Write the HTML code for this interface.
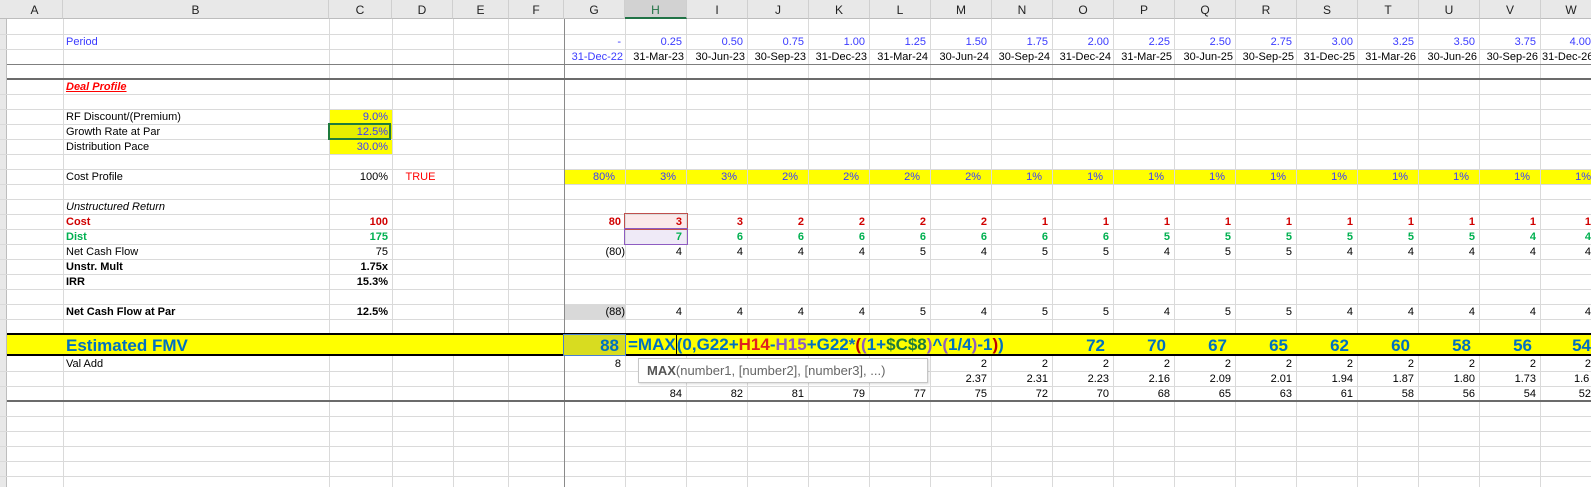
<!DOCTYPE html>
<html><head><meta charset="utf-8"><style>
*{margin:0;padding:0;box-sizing:border-box}
body{width:1591px;height:487px;overflow:hidden;background:#fff;font-family:"Liberation Sans",Arial,sans-serif;font-size:11px;color:#000;position:relative}
div{position:absolute}
.hl{left:0;width:1591px;height:1px;background:#dadada}
.vl{top:19px;width:1px;height:468px;background:#dadada}
.t{height:15px;line-height:17px;white-space:nowrap;text-align:right;padding-right:4px;width:61px}
.l{text-align:left;padding-left:3px;width:300px}
.b{font-weight:bold}
.blu{color:#3b3bff}
.red{color:#d00000;font-weight:bold}
.grn{color:#00b050;font-weight:bold}
.yel{background:#ffff00}
.hd{top:0;height:19px;line-height:20px;text-align:center;font-size:12px;color:#222;background:#e8e8e8;border-right:1px solid #cfcfcf;border-bottom:1px solid #bdbdbd}
.fmv{color:#0070c0;font-weight:bold;font-size:17px;height:22px;line-height:23px;top:334px}
.dt{font-size:11px;padding-right:2px}
</style></head><body>
<div class="hd" style="left:0;width:8px"></div>
<div class="hd" style="left:7px;width:56px">A</div>
<div class="hd" style="left:63px;width:266px">B</div>
<div class="hd" style="left:329px;width:63px">C</div>
<div class="hd" style="left:392px;width:61px">D</div>
<div class="hd" style="left:453px;width:56px">E</div>
<div class="hd" style="left:509px;width:55px">F</div>
<div class="hd" style="left:564px;width:61px">G</div>
<div class="hd" style="left:625px;width:62px;background:#d2d2d2;border-bottom:2px solid #217346;color:#217346">H</div>
<div class="hd" style="left:687px;width:61px">I</div>
<div class="hd" style="left:748px;width:61px">J</div>
<div class="hd" style="left:809px;width:61px">K</div>
<div class="hd" style="left:870px;width:61px">L</div>
<div class="hd" style="left:931px;width:61px">M</div>
<div class="hd" style="left:992px;width:61px">N</div>
<div class="hd" style="left:1053px;width:61px">O</div>
<div class="hd" style="left:1114px;width:61px">P</div>
<div class="hd" style="left:1175px;width:61px">Q</div>
<div class="hd" style="left:1236px;width:61px">R</div>
<div class="hd" style="left:1297px;width:61px">S</div>
<div class="hd" style="left:1358px;width:61px">T</div>
<div class="hd" style="left:1419px;width:61px">U</div>
<div class="hd" style="left:1480px;width:61px">V</div>
<div class="hd" style="left:1541px;width:61px">W</div>
<div style="left:0;top:19px;width:7px;height:468px;background:#e8e8e8;border-right:1px solid #bdbdbd"></div>

<div class="yel" style="left:329px;top:109px;width:63px;height:45px"></div>
<div class="yel" style="left:564px;top:169px;width:1027px;height:15px"></div>
<div style="left:564px;top:304px;width:61px;height:15px;background:#d9d9d9"></div>
<div style="left:625px;top:214px;width:62px;height:15px;background:#fbe9ea"></div>
<div style="left:625px;top:229px;width:62px;height:15px;background:#efeaf7"></div>

<div class="hl" style="top:34px"></div><div class="hl" style="top:49px"></div>
<div class="hl" style="top:94px"></div><div class="hl" style="top:109px"></div><div class="hl" style="top:124px"></div><div class="hl" style="top:139px"></div><div class="hl" style="top:154px"></div><div class="hl" style="top:169px"></div><div class="hl" style="top:184px"></div><div class="hl" style="top:199px"></div><div class="hl" style="top:214px"></div><div class="hl" style="top:229px"></div><div class="hl" style="top:244px"></div><div class="hl" style="top:259px"></div><div class="hl" style="top:274px"></div><div class="hl" style="top:289px"></div><div class="hl" style="top:304px"></div><div class="hl" style="top:319px"></div>
<div class="hl" style="top:371px"></div><div class="hl" style="top:386px"></div><div class="hl" style="top:416px"></div><div class="hl" style="top:431px"></div><div class="hl" style="top:446px"></div><div class="hl" style="top:461px"></div><div class="hl" style="top:476px"></div>
<div class="vl" style="left:63px"></div><div class="vl" style="left:329px"></div><div class="vl" style="left:392px"></div><div class="vl" style="left:453px"></div><div class="vl" style="left:508px"></div>
<div class="vl" style="left:564px;background:#8a8a8a"></div>
<div class="vl" style="left:625px"></div><div class="vl" style="left:686px"></div><div class="vl" style="left:747px"></div><div class="vl" style="left:808px"></div><div class="vl" style="left:869px"></div><div class="vl" style="left:930px"></div><div class="vl" style="left:991px"></div><div class="vl" style="left:1052px"></div><div class="vl" style="left:1113px"></div><div class="vl" style="left:1174px"></div><div class="vl" style="left:1235px"></div><div class="vl" style="left:1296px"></div><div class="vl" style="left:1357px"></div><div class="vl" style="left:1418px"></div><div class="vl" style="left:1479px"></div><div class="vl" style="left:1540px"></div>
<div style="left:7px;top:64px;width:1584px;height:1px;background:#7f7f7f"></div>
<div style="left:7px;top:78px;width:1584px;height:2px;background:#6b6b6b"></div>
<div style="left:7px;top:400px;width:1584px;height:2px;background:#6b6b6b"></div>

<div class="yel" style="left:7px;top:333px;width:1584px;height:23px;border-top:2px solid #000;border-bottom:2px solid #000"></div>

<div class="t l blu" style="left:63px;top:34px">Period</div>
<div class="t l" style="left:63px;top:79px;color:#ff0000;font-weight:bold;font-style:italic;text-decoration:underline">Deal Profile</div>
<div class="t l" style="left:63px;top:109px">RF Discount/(Premium)</div>
<div class="t l" style="left:63px;top:124px">Growth Rate at Par</div>
<div class="t l" style="left:63px;top:139px">Distribution Pace</div>
<div class="t l" style="left:63px;top:169px">Cost Profile</div>
<div class="t l" style="left:63px;top:199px;font-style:italic">Unstructured Return</div>
<div class="t l red" style="left:63px;top:214px">Cost</div>
<div class="t l grn" style="left:63px;top:229px">Dist</div>
<div class="t l" style="left:63px;top:244px">Net Cash Flow</div>
<div class="t l b" style="left:63px;top:259px">Unstr. Mult</div>
<div class="t l b" style="left:63px;top:274px">IRR</div>
<div class="t l b" style="left:63px;top:304px">Net Cash Flow at Par</div>
<div class="t l fmv" style="left:63px">Estimated FMV</div>
<div class="t l" style="left:63px;top:356px">Val Add</div>

<div class="t blu" style="left:329px;top:109px;width:63px">9.0%</div>
<div class="t blu" style="left:329px;top:124px;width:63px;background:#e6ee00">12.5%</div>
<div style="left:328px;top:123px;width:63px;height:17px;border:2px solid #1e7b3c"></div>
<div class="t blu" style="left:329px;top:139px;width:63px">30.0%</div>
<div class="t" style="left:329px;top:169px;width:63px">100%</div>
<div class="t" style="left:392px;top:169px;width:61px;text-align:center;color:#ff0000">TRUE</div>
<div class="t red" style="left:329px;top:214px;width:63px">100</div>
<div class="t grn" style="left:329px;top:229px;width:63px">175</div>
<div class="t" style="left:329px;top:244px;width:63px">75</div>
<div class="t b" style="left:329px;top:259px;width:63px">1.75x</div>
<div class="t b" style="left:329px;top:274px;width:63px">15.3%</div>
<div class="t b" style="left:329px;top:304px;width:63px">12.5%</div>

<div class="t blu" style="left:564px;top:34px">-</div>
<div class="t blu" style="left:625px;top:34px">0.25</div><div class="t blu" style="left:686px;top:34px">0.50</div><div class="t blu" style="left:747px;top:34px">0.75</div><div class="t blu" style="left:808px;top:34px">1.00</div><div class="t blu" style="left:869px;top:34px">1.25</div><div class="t blu" style="left:930px;top:34px">1.50</div><div class="t blu" style="left:991px;top:34px">1.75</div><div class="t blu" style="left:1052px;top:34px">2.00</div><div class="t blu" style="left:1113px;top:34px">2.25</div><div class="t blu" style="left:1174px;top:34px">2.50</div><div class="t blu" style="left:1235px;top:34px">2.75</div><div class="t blu" style="left:1296px;top:34px">3.00</div><div class="t blu" style="left:1357px;top:34px">3.25</div><div class="t blu" style="left:1418px;top:34px">3.50</div><div class="t blu" style="left:1479px;top:34px">3.75</div><div class="t blu" style="left:1540px;top:34px;width:51px;padding-right:0;overflow:hidden;text-align:right">4.00</div>
<div class="t blu dt" style="left:564px;top:49px">31-Dec-22</div>
<div class="t dt" style="left:625px;top:49px">31-Mar-23</div><div class="t dt" style="left:686px;top:49px">30-Jun-23</div><div class="t dt" style="left:747px;top:49px">30-Sep-23</div><div class="t dt" style="left:808px;top:49px">31-Dec-23</div><div class="t dt" style="left:869px;top:49px">31-Mar-24</div><div class="t dt" style="left:930px;top:49px">30-Jun-24</div><div class="t dt" style="left:991px;top:49px">30-Sep-24</div><div class="t dt" style="left:1052px;top:49px">31-Dec-24</div><div class="t dt" style="left:1113px;top:49px">31-Mar-25</div><div class="t dt" style="left:1174px;top:49px">30-Jun-25</div><div class="t dt" style="left:1235px;top:49px">30-Sep-25</div><div class="t dt" style="left:1296px;top:49px">31-Dec-25</div><div class="t dt" style="left:1357px;top:49px">31-Mar-26</div><div class="t dt" style="left:1418px;top:49px">30-Jun-26</div><div class="t dt" style="left:1479px;top:49px">30-Sep-26</div><div class="t dt" style="left:1540px;top:49px;text-align:left;padding-left:2px">31-Dec-26</div>

<div class="t blu" style="left:564px;top:169px;padding-right:10px">80%</div>
<div class="t blu" style="left:625px;top:169px;padding-right:10px">3%</div><div class="t blu" style="left:686px;top:169px;padding-right:10px">3%</div><div class="t blu" style="left:747px;top:169px;padding-right:10px">2%</div><div class="t blu" style="left:808px;top:169px;padding-right:10px">2%</div><div class="t blu" style="left:869px;top:169px;padding-right:10px">2%</div><div class="t blu" style="left:930px;top:169px;padding-right:10px">2%</div><div class="t blu" style="left:991px;top:169px;padding-right:10px">1%</div><div class="t blu" style="left:1052px;top:169px;padding-right:10px">1%</div><div class="t blu" style="left:1113px;top:169px;padding-right:10px">1%</div><div class="t blu" style="left:1174px;top:169px;padding-right:10px">1%</div><div class="t blu" style="left:1235px;top:169px;padding-right:10px">1%</div><div class="t blu" style="left:1296px;top:169px;padding-right:10px">1%</div><div class="t blu" style="left:1357px;top:169px;padding-right:10px">1%</div><div class="t blu" style="left:1418px;top:169px;padding-right:10px">1%</div><div class="t blu" style="left:1479px;top:169px;padding-right:10px">1%</div><div class="t blu" style="left:1540px;top:169px;width:51px;padding-right:0">1%</div>

<div class="t red" style="left:564px;top:214px">80</div>
<div class="t red" style="left:625px;top:214px">3</div><div class="t red" style="left:686px;top:214px">3</div><div class="t red" style="left:747px;top:214px">2</div><div class="t red" style="left:808px;top:214px">2</div><div class="t red" style="left:869px;top:214px">2</div><div class="t red" style="left:930px;top:214px">2</div><div class="t red" style="left:991px;top:214px">1</div><div class="t red" style="left:1052px;top:214px">1</div><div class="t red" style="left:1113px;top:214px">1</div><div class="t red" style="left:1174px;top:214px">1</div><div class="t red" style="left:1235px;top:214px">1</div><div class="t red" style="left:1296px;top:214px">1</div><div class="t red" style="left:1357px;top:214px">1</div><div class="t red" style="left:1418px;top:214px">1</div><div class="t red" style="left:1479px;top:214px">1</div><div class="t red" style="left:1540px;top:214px;width:51px;padding-right:0">1</div>
<div class="t grn" style="left:625px;top:229px">7</div><div class="t grn" style="left:686px;top:229px">6</div><div class="t grn" style="left:747px;top:229px">6</div><div class="t grn" style="left:808px;top:229px">6</div><div class="t grn" style="left:869px;top:229px">6</div><div class="t grn" style="left:930px;top:229px">6</div><div class="t grn" style="left:991px;top:229px">6</div><div class="t grn" style="left:1052px;top:229px">6</div><div class="t grn" style="left:1113px;top:229px">5</div><div class="t grn" style="left:1174px;top:229px">5</div><div class="t grn" style="left:1235px;top:229px">5</div><div class="t grn" style="left:1296px;top:229px">5</div><div class="t grn" style="left:1357px;top:229px">5</div><div class="t grn" style="left:1418px;top:229px">5</div><div class="t grn" style="left:1479px;top:229px">4</div><div class="t grn" style="left:1540px;top:229px;width:51px;padding-right:0">4</div>
<div class="t" style="left:564px;top:244px;padding-right:0">(80)</div>
<div class="t" style="left:625px;top:244px">4</div><div class="t" style="left:686px;top:244px">4</div><div class="t" style="left:747px;top:244px">4</div><div class="t" style="left:808px;top:244px">4</div><div class="t" style="left:869px;top:244px">5</div><div class="t" style="left:930px;top:244px">4</div><div class="t" style="left:991px;top:244px">5</div><div class="t" style="left:1052px;top:244px">5</div><div class="t" style="left:1113px;top:244px">4</div><div class="t" style="left:1174px;top:244px">5</div><div class="t" style="left:1235px;top:244px">5</div><div class="t" style="left:1296px;top:244px">4</div><div class="t" style="left:1357px;top:244px">4</div><div class="t" style="left:1418px;top:244px">4</div><div class="t" style="left:1479px;top:244px">4</div><div class="t" style="left:1540px;top:244px;width:51px;padding-right:0">4</div>
<div class="t" style="left:564px;top:304px;padding-right:0">(88)</div>
<div class="t" style="left:625px;top:304px">4</div><div class="t" style="left:686px;top:304px">4</div><div class="t" style="left:747px;top:304px">4</div><div class="t" style="left:808px;top:304px">4</div><div class="t" style="left:869px;top:304px">5</div><div class="t" style="left:930px;top:304px">4</div><div class="t" style="left:991px;top:304px">5</div><div class="t" style="left:1052px;top:304px">5</div><div class="t" style="left:1113px;top:304px">4</div><div class="t" style="left:1174px;top:304px">5</div><div class="t" style="left:1235px;top:304px">5</div><div class="t" style="left:1296px;top:304px">4</div><div class="t" style="left:1357px;top:304px">4</div><div class="t" style="left:1418px;top:304px">4</div><div class="t" style="left:1479px;top:304px">4</div><div class="t" style="left:1540px;top:304px;width:51px;padding-right:0">4</div>

<div style="left:624px;top:213px;width:64px;height:17px;border:1.5px solid #c0504d"></div>
<div style="left:624px;top:228px;width:64px;height:17px;border:1.5px solid #8e5cc2"></div>

<div class="fmv" style="left:564px;width:61px;text-align:right;padding-right:6px;background:#d8dc20;top:335px;height:20px;line-height:21px">88</div>
<div style="left:563px;top:334px;width:63px;height:22px;border:1.5px solid #4a7fd0"></div>
<div class="fmv" style="left:628px;top:333px"><span style="color:#0070c0">=MAX</span><span style="color:#0070c0;border-left:1px solid #000">(</span><span style="color:#0070c0">0,G22+</span><span style="color:#e02020">H14</span><span style="color:#0070c0">-</span><span style="color:#8e5cc2">H15</span><span style="color:#0070c0">+G22*</span><span style="color:#c00000">(</span><span style="color:#8e5cc2">(</span><span style="color:#0070c0">1+</span><span style="color:#1e7b3c">$C$8</span><span style="color:#8e5cc2">)</span><span style="color:#0070c0">^</span><span style="color:#8e5cc2">(</span><span style="color:#0070c0">1/4</span><span style="color:#8e5cc2">)</span><span style="color:#0070c0">-1</span><span style="color:#c00000">)</span><span style="color:#0070c0">)</span></div>
<div class="t fmv" style="left:1052px;padding-right:8px">72</div><div class="t fmv" style="left:1113px;padding-right:8px">70</div><div class="t fmv" style="left:1174px;padding-right:8px">67</div><div class="t fmv" style="left:1235px;padding-right:8px">65</div><div class="t fmv" style="left:1296px;padding-right:8px">62</div><div class="t fmv" style="left:1357px;padding-right:8px">60</div><div class="t fmv" style="left:1418px;padding-right:8px">58</div><div class="t fmv" style="left:1479px;padding-right:8px">56</div><div class="t fmv" style="left:1540px;width:51px;padding-right:0">54</div>

<div class="t" style="left:564px;top:356px">8</div>
<div class="t" style="left:930px;top:356px">2</div><div class="t" style="left:991px;top:356px">2</div><div class="t" style="left:1052px;top:356px">2</div><div class="t" style="left:1113px;top:356px">2</div><div class="t" style="left:1174px;top:356px">2</div><div class="t" style="left:1235px;top:356px">2</div><div class="t" style="left:1296px;top:356px">2</div><div class="t" style="left:1357px;top:356px">2</div><div class="t" style="left:1418px;top:356px">2</div><div class="t" style="left:1479px;top:356px">2</div><div class="t" style="left:1540px;top:356px;width:51px;padding-right:0">2</div>
<div class="t" style="left:930px;top:371px">2.37</div><div class="t" style="left:991px;top:371px">2.31</div><div class="t" style="left:1052px;top:371px">2.23</div><div class="t" style="left:1113px;top:371px">2.16</div><div class="t" style="left:1174px;top:371px">2.09</div><div class="t" style="left:1235px;top:371px">2.01</div><div class="t" style="left:1296px;top:371px">1.94</div><div class="t" style="left:1357px;top:371px">1.87</div><div class="t" style="left:1418px;top:371px">1.80</div><div class="t" style="left:1479px;top:371px">1.73</div><div class="t" style="left:1540px;top:371px;text-align:left;padding-left:34px;width:51px;overflow:hidden">1.6</div>
<div class="t" style="left:625px;top:386px">84</div><div class="t" style="left:686px;top:386px">82</div><div class="t" style="left:747px;top:386px">81</div><div class="t" style="left:808px;top:386px">79</div><div class="t" style="left:869px;top:386px">77</div><div class="t" style="left:930px;top:386px">75</div><div class="t" style="left:991px;top:386px">72</div><div class="t" style="left:1052px;top:386px">70</div><div class="t" style="left:1113px;top:386px">68</div><div class="t" style="left:1174px;top:386px">65</div><div class="t" style="left:1235px;top:386px">63</div><div class="t" style="left:1296px;top:386px">61</div><div class="t" style="left:1357px;top:386px">58</div><div class="t" style="left:1418px;top:386px">56</div><div class="t" style="left:1479px;top:386px">54</div><div class="t" style="left:1540px;top:386px;width:51px;padding-right:0">52</div>

<div style="left:638px;top:358px;width:290px;height:25px;background:#fff;border:1px solid #c6c6c6;box-shadow:1px 1px 2px rgba(0,0,0,.15);line-height:23px;padding-left:8px;font-size:13px;color:#666;white-space:nowrap"><b style="color:#555">MAX</b>(number1, [number2], [number3], ...)</div>
</body></html>
